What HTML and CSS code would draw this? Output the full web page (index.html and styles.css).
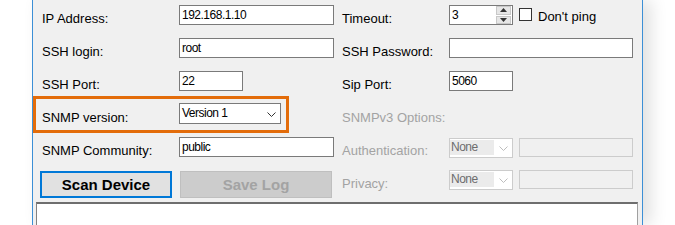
FILE: index.html
```html
<!DOCTYPE html>
<html lang="en">
<head>
    <meta charset="UTF-8">
    <title>Device Scanner</title>
    <link rel="stylesheet" href="styles.css">
</head>
<body>
    <div class="window">
        <div class="form">
            <!-- row 1 -->
            <label class="lbl">IP Address:</label>
            <div class="cell"><input class="txt wide" value="192.168.1.10"></div>
            <label class="lbl">Timeout:</label>
            <div class="cell inline">
                <div class="spin">
                    <span class="spin-val">3</span>
                    <div class="spin-btns">
                        <div class="spin-btn"><svg width="7" height="4" viewBox="0 0 7 4"><path d="M0 4 L3.5 0 L7 4 Z" fill="#333"/></svg></div>
                        <div class="spin-btn"><svg width="7" height="4" viewBox="0 0 7 4"><path d="M0 0 L3.5 4 L7 0 Z" fill="#333"/></svg></div>
                    </div>
                </div>
                <span class="check"></span>
                <span class="check-lbl">Don't ping</span>
            </div>

            <!-- row 2 -->
            <label class="lbl">SSH login:</label>
            <div class="cell"><input class="txt wide" value="root"></div>
            <label class="lbl">SSH Password:</label>
            <div class="cell"><input class="txt pass" value=""></div>

            <!-- row 3 -->
            <label class="lbl">SSH Port:</label>
            <div class="cell"><input class="txt short" value="22"></div>
            <label class="lbl">Sip Port:</label>
            <div class="cell"><input class="txt short" value="5060"></div>

            <!-- row 4 -->
            <label class="lbl">SNMP version:</label>
            <div class="cell">
                <div class="combo version">
                    <span class="combo-val">Version 1</span>
                    <svg class="chev" width="9" height="5" viewBox="0 0 9 5"><polyline points="0.5,0.5 4.5,4.5 8.5,0.5" fill="none" stroke="#333" stroke-width="1"/></svg>
                </div>
            </div>
            <label class="lbl off">SNMPv3 Options:</label>
            <div class="cell"></div>

            <!-- row 5 -->
            <label class="lbl">SNMP Community:</label>
            <div class="cell"><input class="txt wide" value="public"></div>
            <label class="lbl off">Authentication:</label>
            <div class="cell inline down1">
                <div class="combo small">
                    <span class="combo-sel">None</span>
                    <svg class="chev" width="9" height="5" viewBox="0 0 9 5"><polyline points="0.5,0.5 4.5,4.5 8.5,0.5" fill="none" stroke="#bdbdbd" stroke-width="1"/></svg>
                </div>
                <div class="txt-off"></div>
            </div>

            <!-- row 6 -->
            <div class="cell btn-cell"><button class="btn scan">Scan Device</button></div>
            <div class="cell btn-cell"><button class="btn save" disabled>Save Log</button></div>
            <label class="lbl off">Privacy:</label>
            <div class="cell inline">
                <div class="combo small">
                    <span class="combo-sel">None</span>
                    <svg class="chev" width="9" height="5" viewBox="0 0 9 5"><polyline points="0.5,0.5 4.5,4.5 8.5,0.5" fill="none" stroke="#bdbdbd" stroke-width="1"/></svg>
                </div>
                <div class="txt-off"></div>
            </div>
        </div>

        <div class="log"></div>

        <!-- highlight drawn over the SNMP version row -->
        <div class="highlight"></div>
    </div>
</body>
</html>
```

FILE: styles.css
```css
body {
    margin: 0;
    background: #ffffff;
    font-family: "Liberation Sans", Arial, sans-serif;
    overflow: hidden;
}

.window {
    position: relative;
    margin-left: 32px;
    width: 611px;
    height: 225px;
    box-sizing: border-box;
    background: #f0f0f0;
    border-left: 1px solid #3c8fd6;
    border-right: 1px solid #3c8fd6;
    box-shadow: 8px 0 16px rgba(0, 0, 0, 0.12);
}

.form {
    display: grid;
    grid-template-columns: 137px 163px 107px 184px;
    grid-auto-rows: 33px;
    padding: 5px 0 0 9px;
}

.lbl {
    font-size: 13px;
    line-height: 15px;
    padding-top: 6px;
    color: #000;
    white-space: nowrap;
}

.lbl.off {
    color: #a3a3a3;
}

.cell.inline {
    display: flex;
    align-items: flex-start;
}

.cell.down1 {
    margin-top: 1px;
}

.txt {
    display: block;
    height: 20px;
    box-sizing: border-box;
    border: 1px solid #7a7a7a;
    background: #fff;
    padding: 0 2px;
    margin: 0;
    font-family: "Liberation Sans", Arial, sans-serif;
    font-size: 12px;
    letter-spacing: -0.5px;
    color: #000;
    outline: none;
}

.txt.wide { width: 155px; }
.txt.short { width: 64px; }
.txt.pass { width: 184px; }

/* numeric up-down */
.spin {
    position: relative;
    width: 64px;
    height: 20px;
    box-sizing: border-box;
    border: 1px solid #7a7a7a;
    background: #fff;
}

.spin-val {
    display: block;
    padding-left: 2px;
    font-size: 12px;
    line-height: 18px;
    letter-spacing: -0.5px;
}

.spin-btns {
    position: absolute;
    top: 0;
    right: 1px;
    width: 15px;
    height: 18px;
    display: flex;
    flex-direction: column;
    gap: 1px;
}

.spin-btn {
    flex: 1;
    background: #e6e6e6;
    border: 1px solid #c8c8c8;
    display: flex;
    align-items: center;
    justify-content: center;
}

.check {
    width: 13px;
    height: 13px;
    box-sizing: border-box;
    border: 1px solid #333;
    background: #fff;
    margin: 3px 0 0 6px;
}

.check-lbl {
    font-size: 13px;
    line-height: 15px;
    margin: 4px 0 0 6px;
    white-space: nowrap;
}

/* combo boxes */
.combo {
    position: relative;
    height: 21px;
    box-sizing: border-box;
    border: 1px solid #7a7a7a;
    background: #fff;
    font-size: 12px;
    letter-spacing: -0.5px;
}

.combo.version {
    width: 102px;
    margin-top: -1px;
}

.combo-val {
    display: block;
    padding-left: 2px;
    line-height: 19px;
}

.combo .chev {
    position: absolute;
    right: 4px;
    top: 8px;
}

.combo.small {
    width: 64px;
    height: 20px;
    border-color: #cccccc;
}

.combo.small .chev {
    right: 4px;
    top: 7px;
}

.combo-sel {
    position: absolute;
    left: 0;
    top: 1px;
    width: 43px;
    height: 15px;
    background: #ebebeb;
    color: #6d6d6d;
    line-height: 15px;
    padding-left: 1px;
}

.txt-off {
    width: 114px;
    height: 19px;
    box-sizing: border-box;
    margin-left: 6px;
    border: 1px solid #cccccc;
    background: #f0f0f0;
}

/* buttons */
.btn-cell {
    padding-top: 1px;
}

.btn {
    height: 27px;
    box-sizing: border-box;
    font-family: "Liberation Sans", Arial, sans-serif;
    font-size: 15px;
    font-weight: bold;
    padding: 0;
}

.btn.scan {
    width: 132px;
    margin-left: -2px;
    background: #e1e1e1;
    border: 2px solid #0078d7;
    color: #000;
}

.btn.save {
    width: 152px;
    margin-left: 1px;
    background: #cccccc;
    border: 1px solid #bfbfbf;
    color: #a3a3a3;
}

.log {
    margin: -1px 0 0 3px;
    width: 602px;
    height: 23px;
    box-sizing: border-box;
    background: #fff;
    border: 1px solid #a0a0a0;
    border-bottom: none;
    border-top: 2px solid #6e6e6e;
    border-left-color: #828282;
}

.highlight {
    position: absolute;
    left: 0;
    top: 96px;
    width: 256px;
    height: 37px;
    box-sizing: border-box;
    border: 3px solid #e36c0a;
}
```
